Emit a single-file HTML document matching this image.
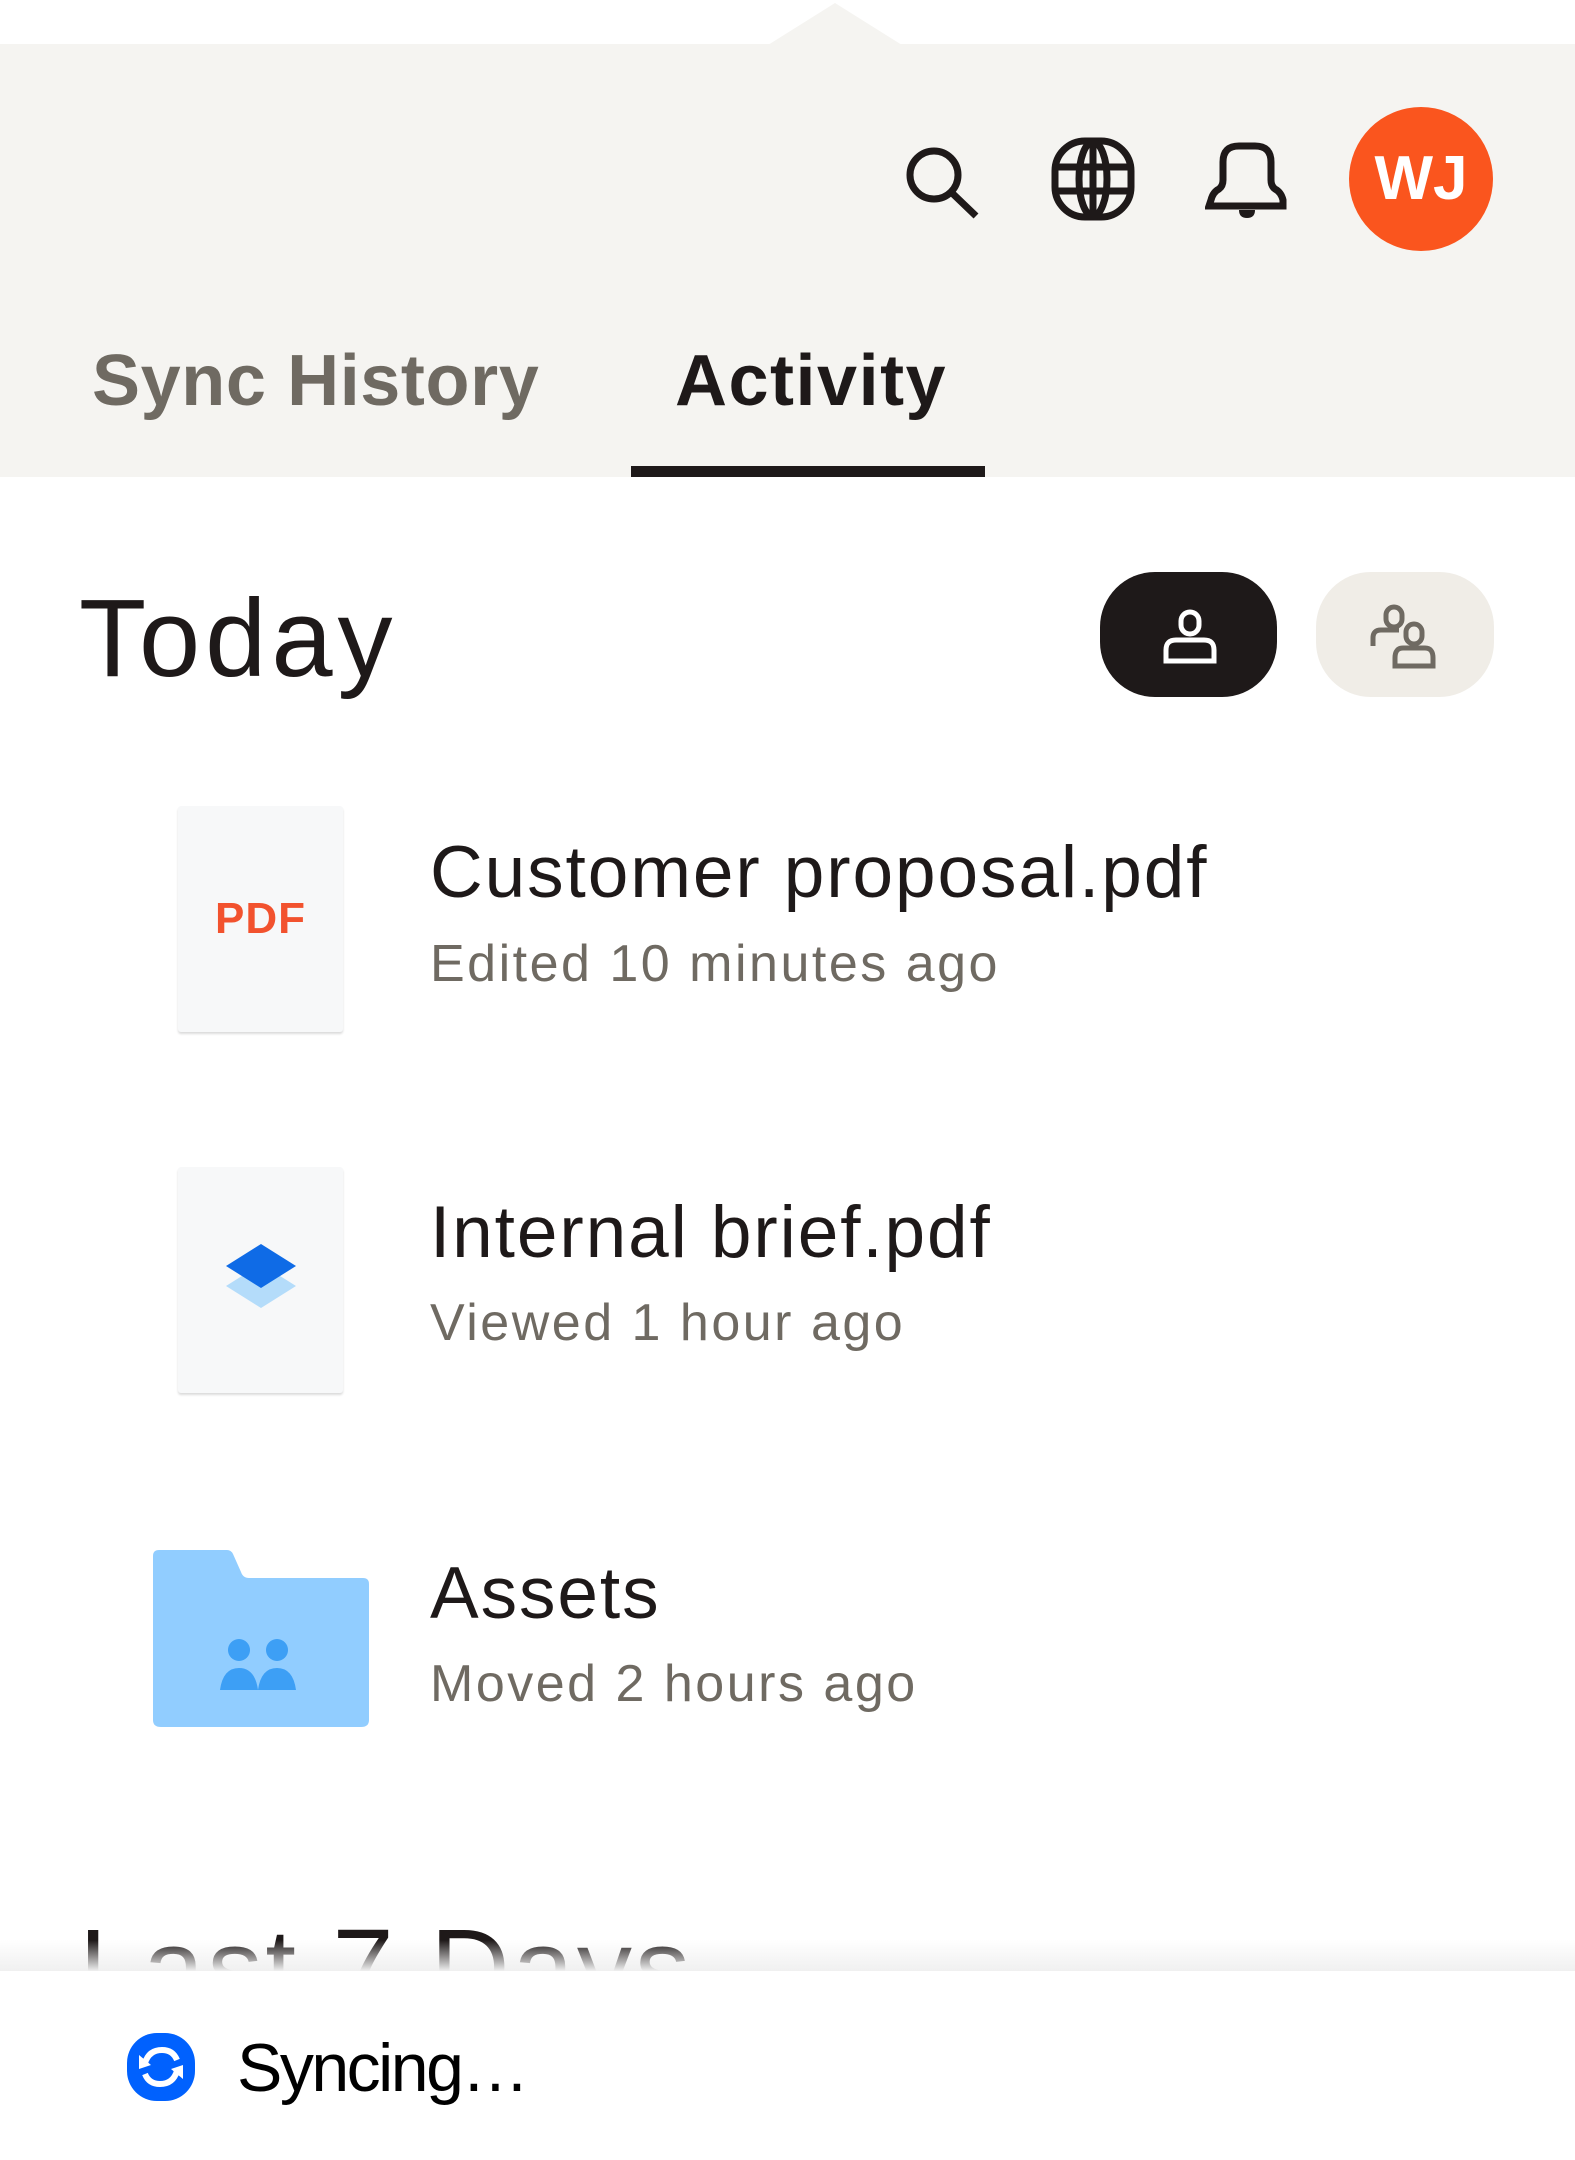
<!DOCTYPE html>
<html><head><meta charset="utf-8"><style>
*{margin:0;padding:0;box-sizing:border-box}
body{width:1575px;height:2160px;background:#fff;position:relative;overflow:hidden;font-family:"Liberation Sans",sans-serif;color:#1e1919}
.a{position:absolute;line-height:1;white-space:nowrap}
.t{font-size:73px;color:#1e1919;letter-spacing:1.9px}
.s{font-size:52px;color:#6f6a62;letter-spacing:2.5px}
</style></head><body>
<div class="a" style="left:0;top:44px;width:1575px;height:433px;background:#f5f4f1"></div>
<svg class="a" style="left:760px;top:0" width="150" height="46"><polygon points="8,45 75,3 142,45" fill="#f5f4f1"/></svg>
<svg class="a" style="left:900px;top:139px" width="84" height="84" viewBox="0 0 84 84" fill="none" stroke="#1e1919" stroke-width="7"><circle cx="34" cy="36" r="24"/><line x1="51" y1="53" x2="76" y2="77"/></svg>
<svg class="a" style="left:1051px;top:137px" width="84" height="84" viewBox="0 0 84 84" fill="none" stroke="#1e1919" stroke-width="7"><rect x="4" y="4" width="76" height="76" rx="30"/><ellipse cx="42" cy="42" rx="14" ry="37"/><line x1="6" y1="30" x2="78" y2="30"/><line x1="6" y1="54" x2="78" y2="54"/><line x1="42" y1="5" x2="42" y2="79"/></svg>
<svg class="a" style="left:1205px;top:140px" width="84" height="84" viewBox="0 0 84 84" fill="none" stroke="#1e1919" stroke-width="7"><path d="M4 66 H78 V60 Q76 52 70 49 Q66 46 66 40 V22 Q66 6 50 6 H34 Q18 6 18 22 V40 Q18 46 14 49 Q8 52 6 60 Z"/><path d="M34 70 Q34 78 42 78 Q50 78 50 70 Z" fill="#1e1919" stroke="none"/></svg>
<div class="a" style="left:1349px;top:107px;width:144px;height:144px;border-radius:50%;background:#fa551e;color:#fff;font-weight:bold;font-size:62px;text-align:center;line-height:144px">WJ</div>
<div class="a" style="left:92px;top:345px;font-size:72px;font-weight:bold;color:#6f6a62;letter-spacing:0.6px">Sync History</div>
<div class="a" style="left:675px;top:345px;font-size:72px;font-weight:bold;color:#1e1919;letter-spacing:1.5px">Activity</div>
<div class="a" style="left:631px;top:466px;width:354px;height:11px;background:#1e1919"></div>
<div class="a" style="left:79px;top:584px;font-size:110px;letter-spacing:5px">Today</div>
<div class="a" style="left:1100px;top:572px;width:177px;height:125px;border-radius:55px;background:#1e1919"></div>
<svg class="a" style="left:1160px;top:606px" width="60" height="60" viewBox="0 0 60 60" fill="none" stroke="#fff" stroke-width="5"><rect x="21" y="6" width="18" height="22" rx="9"/><path d="M6 55 V44 Q6 34 16 34 H44 Q54 34 54 44 V55 Z"/></svg>
<div class="a" style="left:1316px;top:572px;width:178px;height:125px;border-radius:55px;background:#f0ede7"></div>
<svg class="a" style="left:1369px;top:602px" width="76" height="68" viewBox="0 0 76 68" fill="none" stroke="#6f6a62" stroke-width="5"><rect x="17" y="5" width="16" height="20" rx="8"/><path d="M4 44 V36 Q4 28 12 28 H30"/><rect x="37" y="22" width="16" height="20" rx="8"/><path d="M26 64 V56 Q26 46 34 46 H56 Q64 46 64 56 V64 Z"/></svg>
<div class="a" style="left:178px;top:806px;width:165px;height:226px;background:#f7f8f9;border-radius:3px;box-shadow:0 2px 2px #dcdcdc"></div>
<div class="a" style="left:178px;top:897px;width:165px;text-align:center;font-size:44px;font-weight:bold;color:#f2522e;letter-spacing:1px">PDF</div>
<div class="a t" style="left:430px;top:836px">Customer proposal.pdf</div>
<div class="a s" style="left:430px;top:938px">Edited 10 minutes ago</div>
<div class="a" style="left:178px;top:1167px;width:165px;height:226px;background:#f7f8f9;border-radius:3px;box-shadow:0 2px 2px #dcdcdc"></div>
<svg class="a" style="left:224px;top:1240px" width="74" height="80" viewBox="0 0 74 80"><path d="M37 24 L72 46 L37 68 L2 46 Z" fill="#b4dcfa"/><path d="M37 4 L72 26 L37 48 L2 26 Z" fill="#0f6be6"/></svg>
<div class="a t" style="left:430px;top:1196px">Internal brief.pdf</div>
<div class="a s" style="left:430px;top:1297px">Viewed 1 hour ago</div>
<svg class="a" style="left:153px;top:1550px" width="216" height="178" viewBox="0 0 216 178"><path d="M0 6 Q0 0 6 0 H74 Q78 0 80 4 L88 22 Q90 28 96 28 H210 Q216 28 216 34 V170 Q216 177 208 177 H8 Q0 177 0 170 Z" fill="#91cdff"/><circle cx="86" cy="100" r="11" fill="#3d9ff5"/><circle cx="124" cy="100" r="11" fill="#3d9ff5"/><path d="M67 140 Q70 118 86 118 Q102 118 105 140 Z M105 140 Q108 118 124 118 Q140 118 143 140 Z" fill="#3d9ff5"/></svg>
<div class="a t" style="left:430px;top:1557px">Assets</div>
<div class="a s" style="left:430px;top:1658px">Moved 2 hours ago</div>
<div class="a" style="left:79px;top:1914px;font-size:110px;letter-spacing:3px">Last 7 Days</div>
<div class="a" style="left:0;top:1940px;width:1575px;height:31px;background:linear-gradient(#fff0,#f0f0f0)"></div>
<div class="a" style="left:0;top:1971px;width:1575px;height:189px;background:#fff"></div>
<svg class="a" style="left:127px;top:2033px" width="68" height="68" viewBox="0 0 68 68"><rect x="0" y="0" width="68" height="68" rx="30" fill="#0061fe"/><g fill="none" stroke="#fff" stroke-width="6"><path d="M18 30 Q22 17 35 17 Q46 17 50 27"/><path d="M50 38 Q46 51 33 51 Q22 51 18 41"/></g><path d="M12 22 L24 32 L12 36 Z M56 46 L44 36 L56 32 Z" fill="#fff"/></svg>
<div class="a" style="left:237px;top:2034px;font-size:68px;color:#000;letter-spacing:-2.5px">Syncing…</div>
</body></html>
